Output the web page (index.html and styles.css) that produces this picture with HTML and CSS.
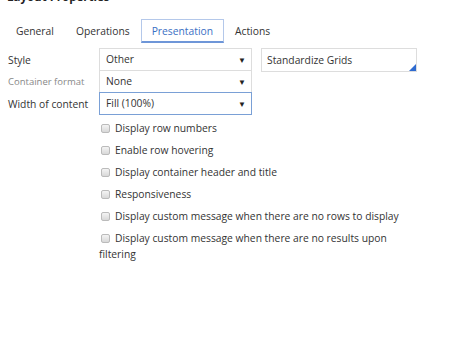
FILE: index.html
```html
<!DOCTYPE html>
<html lang="en">
<head>
    <meta charset="UTF-8">
    <title>Layout Properties</title>
    <link rel="stylesheet" href="styles.css">
</head>
<body>
    <div class="panel">
        <h3 class="panel-title">Layout Properties</h3>

        <div class="tabs">
            <div class="tab">General</div>
            <div class="tab">Operations</div>
            <div class="tab active">Presentation</div>
            <div class="tab">Actions</div>
        </div>

        <div class="form">
            <div class="fields">
                <div class="row">
                    <label class="label">Style</label>
                    <div class="select">Other<span class="arrow">&#9660;</span></div>
                </div>
                <div class="row">
                    <label class="label small">Container format</label>
                    <div class="select">None<span class="arrow">&#9660;</span></div>
                </div>
                <div class="row">
                    <label class="label">Width of content</label>
                    <div class="select focused">Fill (100%)<span class="arrow">&#9660;</span></div>
                </div>
            </div>
            <div class="text-box">Standardize Grids<span class="corner"></span></div>
        </div>

        <div class="options">
            <div class="option"><span class="check"></span>Display row numbers</div>
            <div class="option"><span class="check"></span>Enable row hovering</div>
            <div class="option"><span class="check"></span>Display container header and title</div>
            <div class="option"><span class="check"></span>Responsiveness</div>
            <div class="option"><span class="check"></span>Display custom message when there are no rows to display</div>
            <div class="option"><span class="check"></span>Display custom message when there are no results upon filtering</div>
        </div>
    </div>
</body>
</html>
```

FILE: styles.css
```css
body {
    font-family: 'Open Sans', 'Noto Sans', sans-serif;
    font-size: 10.3px;
    color: #333;
    background-color: #fff;
    margin: 0;
    padding: 0;
}

.panel {
    padding-left: 8px;
}

.panel-title {
    margin: -11px 0 0 -1px;
    font-size: 11.5px;
    line-height: 16px;
    font-weight: bold;
    color: #222;
}

.tabs {
    display: flex;
    margin: 14px 0 0 -3px;
}

.tab {
    padding: 0 10px;
    height: 21px;
    line-height: 22px;
    border: 1px solid transparent;
    border-bottom-width: 2px;
}

.tab.active {
    color: #3a6fc4;
    border-color: #b4c8ea;
    border-bottom-color: #6e96d8;
}

.form {
    display: flex;
    align-items: flex-start;
    gap: 9px;
    margin-top: 5px;
}

.row {
    display: flex;
    align-items: center;
    margin-top: -1px;
}

.row:first-child {
    margin-top: 0;
}

.label {
    width: 91px;
}

.label.small {
    font-size: 9.5px;
    color: #888;
}

.select {
    position: relative;
    width: 145px;
    height: 21px;
    line-height: 21px;
    padding-left: 6px;
    border: 1px solid #ddd;
    background-color: #fff;
}

.select.focused {
    border-color: #7aa0d6;
    z-index: 1;
}

.arrow {
    position: absolute;
    right: 5px;
    top: 0;
    font-size: 8px;
    color: #222;
}

.text-box {
    position: relative;
    width: 149px;
    height: 22px;
    line-height: 22px;
    padding-left: 5px;
    border: 1px solid #ddd;
}

.corner {
    position: absolute;
    right: 0;
    bottom: 0;
    width: 0;
    height: 0;
    border-left: 7px solid transparent;
    border-bottom: 7px solid #2f6bd0;
}

.options {
    margin: 5px 0 0 91px;
    width: 317px;
}

.option {
    line-height: 16px;
    margin-bottom: 6px;
}

.check {
    display: inline-block;
    width: 7px;
    height: 7px;
    margin: 0 5px 0 2px;
    border: 1px solid #bbb;
    border-radius: 2px;
    background: linear-gradient(to bottom, #f4f4f4, #d8d8d8);
    vertical-align: -1px;
}
```
